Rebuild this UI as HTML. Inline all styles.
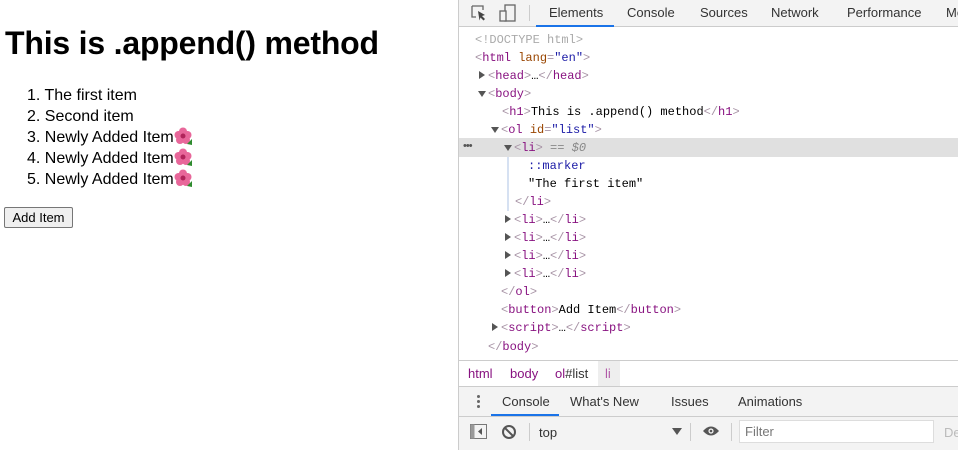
<!DOCTYPE html>
<html><head><style>
*{margin:0;padding:0;box-sizing:border-box}
body{width:958px;height:450px;overflow:hidden;background:#fff;font-family:"Liberation Sans",sans-serif;position:relative}
.left{position:absolute;left:0;top:0;width:459px;height:450px}
h1{position:absolute;left:5px;top:27px;font-size:32px;line-height:32px;font-weight:bold;letter-spacing:-0.2px;color:#000}
.li{position:absolute;left:27px;font-size:16px;color:#000;height:21px;line-height:21px}
.fl{display:inline-block;vertical-align:-3px;width:18px;height:18px}
.btn{position:absolute;left:4px;top:207px;width:69px;height:21px;border:1px solid #767676;border-radius:2px;background:#efefef;font-size:13px;text-align:center;line-height:19px}
.dt{position:absolute;left:458px;top:0;width:500px;height:450px;border-left:1px solid #ccc;background:#fff}
.tb{position:absolute;left:0;top:0;width:500px;height:27px;background:#f3f3f3;border-bottom:1px solid #ccc}
.tab{position:absolute;top:0;height:26px;line-height:25px;font-size:13px;color:#333}
.code{position:absolute;left:0;top:31px;width:500px;font-family:"Liberation Mono",monospace;font-size:12px}
.ln{position:absolute;height:18px;line-height:18px;white-space:pre}
.t{color:#881280}.b{color:#a894a6}.a{color:#994500}.v{color:#1a1aa6}.g{color:#aaa}.m{color:#1a1aa6}
.tri{position:absolute;width:0;height:0}
.r{border-top:4px solid transparent;border-bottom:4px solid transparent;border-left:6px solid #555}
.d{border-left:4px solid transparent;border-right:4px solid transparent;border-top:6px solid #555}
</style></head><body>
<div class="left">
<h1>This is .append() method</h1>
<div class="li" style="top:85px">1. The first item</div>
<div class="li" style="top:106px">2. Second item</div>
<div class="li" style="top:127px">3. Newly Added Item<svg class="fl" viewBox="0 0 18 18"><circle cx="9" cy="4.5" r="4" fill="#e8679a"/><circle cx="4.5" cy="8" r="4" fill="#e8679a"/><circle cx="13.5" cy="8" r="4" fill="#e8679a"/><circle cx="6" cy="13" r="4" fill="#e8679a"/><circle cx="12" cy="13" r="4" fill="#e8679a"/><circle cx="9" cy="9" r="2.5" fill="#b0245a"/><path d="M13 17 L18 12 L18 18 Z" fill="#2e8b2e"/></svg></div>
<div class="li" style="top:148px">4. Newly Added Item<svg class="fl" viewBox="0 0 18 18"><circle cx="9" cy="4.5" r="4" fill="#e8679a"/><circle cx="4.5" cy="8" r="4" fill="#e8679a"/><circle cx="13.5" cy="8" r="4" fill="#e8679a"/><circle cx="6" cy="13" r="4" fill="#e8679a"/><circle cx="12" cy="13" r="4" fill="#e8679a"/><circle cx="9" cy="9" r="2.5" fill="#b0245a"/><path d="M13 17 L18 12 L18 18 Z" fill="#2e8b2e"/></svg></div>
<div class="li" style="top:169px">5. Newly Added Item<svg class="fl" viewBox="0 0 18 18"><circle cx="9" cy="4.5" r="4" fill="#e8679a"/><circle cx="4.5" cy="8" r="4" fill="#e8679a"/><circle cx="13.5" cy="8" r="4" fill="#e8679a"/><circle cx="6" cy="13" r="4" fill="#e8679a"/><circle cx="12" cy="13" r="4" fill="#e8679a"/><circle cx="9" cy="9" r="2.5" fill="#b0245a"/><path d="M13 17 L18 12 L18 18 Z" fill="#2e8b2e"/></svg></div>
<div class="btn">Add Item</div>
</div>
<div class="dt">
<div class="tb">
<svg style="position:absolute;left:12px;top:5px" width="16" height="16" viewBox="0 0 16 16"><path d="M1 1h11v4M1 1v11h4" fill="none" stroke="#666" stroke-width="1.3"/><path d="M7 6l7 4-3 1 3 3-1.5 1.5-3-3-1 3z" fill="#444"/></svg>
<svg style="position:absolute;left:40px;top:4px" width="18" height="18" viewBox="0 0 18 18"><rect x="6" y="1" width="10" height="16" fill="none" stroke="#666" stroke-width="1.3"/><rect x="1" y="7" width="6" height="10" fill="#f3f3f3" stroke="#666" stroke-width="1.3"/></svg>
<div style="position:absolute;left:70px;top:5px;width:1px;height:16px;background:#ccc"></div>
<div class="tab" style="left:90px;color:#333">Elements</div>
<div style="position:absolute;left:77px;top:25px;width:78px;height:2px;background:#1a73e8"></div>
<div class="tab" style="left:168px">Console</div>
<div class="tab" style="left:241px">Sources</div>
<div class="tab" style="left:312px">Network</div>
<div class="tab" style="left:388px">Performance</div>
<div class="tab" style="left:487px">Me</div>
</div>
<div style="position:absolute;left:0;top:138px;width:500px;height:19px;background:#e0e0e0"></div>
<div style="position:absolute;left:4px;top:140px;font-size:11px;color:#555;letter-spacing:-1px">•••</div>
<div style="position:absolute;left:48px;top:157px;width:2px;height:54px;background:#d6e1f2"></div>
<div class="code">
<div class="ln g" style="left:16px;top:0">&lt;!DOCTYPE html&gt;</div>
<div class="ln" style="left:16px;top:18px"><span class="b">&lt;</span><span class="t">html</span> <span class="a">lang</span><span class="b">=</span><span class="v">"en"</span><span class="b">&gt;</span></div>
<div class="tri r" style="left:20px;top:40px"></div>
<div class="ln" style="left:29px;top:36px"><span class="b">&lt;</span><span class="t">head</span><span class="b">&gt;</span>…<span class="b">&lt;/</span><span class="t">head</span><span class="b">&gt;</span></div>
<div class="tri d" style="left:19px;top:60px"></div>
<div class="ln" style="left:29px;top:54px"><span class="b">&lt;</span><span class="t">body</span><span class="b">&gt;</span></div>
<div class="ln" style="left:43px;top:72px"><span class="b">&lt;</span><span class="t">h1</span><span class="b">&gt;</span>This is .append() method<span class="b">&lt;/</span><span class="t">h1</span><span class="b">&gt;</span></div>
<div class="tri d" style="left:32px;top:96px"></div>
<div class="ln" style="left:42px;top:90px"><span class="b">&lt;</span><span class="t">ol</span> <span class="a">id</span><span class="b">=</span><span class="v">"list"</span><span class="b">&gt;</span></div>
<div class="tri d" style="left:45px;top:114px"></div>
<div class="ln" style="left:55px;top:108px"><span class="b">&lt;</span><span class="t">li</span><span class="b">&gt;</span><span style="color:#888;font-style:italic"> == $0</span></div>
<div class="ln m" style="left:69px;top:126px">::marker</div>
<div class="ln" style="left:69px;top:144px">"The first item"</div>
<div class="ln" style="left:56px;top:162px"><span class="b">&lt;/</span><span class="t">li</span><span class="b">&gt;</span></div>
<div class="tri r" style="left:46px;top:184px"></div><div class="ln" style="left:55px;top:180px"><span class="b">&lt;</span><span class="t">li</span><span class="b">&gt;</span>…<span class="b">&lt;/</span><span class="t">li</span><span class="b">&gt;</span></div>
<div class="tri r" style="left:46px;top:202px"></div><div class="ln" style="left:55px;top:198px"><span class="b">&lt;</span><span class="t">li</span><span class="b">&gt;</span>…<span class="b">&lt;/</span><span class="t">li</span><span class="b">&gt;</span></div>
<div class="tri r" style="left:46px;top:220px"></div><div class="ln" style="left:55px;top:216px"><span class="b">&lt;</span><span class="t">li</span><span class="b">&gt;</span>…<span class="b">&lt;/</span><span class="t">li</span><span class="b">&gt;</span></div>
<div class="tri r" style="left:46px;top:238px"></div><div class="ln" style="left:55px;top:234px"><span class="b">&lt;</span><span class="t">li</span><span class="b">&gt;</span>…<span class="b">&lt;/</span><span class="t">li</span><span class="b">&gt;</span></div>
<div class="ln" style="left:42px;top:252px"><span class="b">&lt;/</span><span class="t">ol</span><span class="b">&gt;</span></div>
<div class="ln" style="left:42px;top:270px"><span class="b">&lt;</span><span class="t">button</span><span class="b">&gt;</span>Add Item<span class="b">&lt;/</span><span class="t">button</span><span class="b">&gt;</span></div>
<div class="tri r" style="left:33px;top:292px"></div><div class="ln" style="left:42px;top:288px"><span class="b">&lt;</span><span class="t">script</span><span class="b">&gt;</span>…<span class="b">&lt;/</span><span class="t">script</span><span class="b">&gt;</span></div>
<div class="ln" style="left:29px;top:307px"><span class="b">&lt;/</span><span class="t">body</span><span class="b">&gt;</span></div>
</div>
<div style="position:absolute;left:0;top:360px;width:500px;height:26px;border-top:1px solid #ccc;background:#fff;font-size:13px;line-height:26px">
<span style="position:absolute;left:9px;color:#881280">html</span>
<span style="position:absolute;left:51px;color:#881280">body</span>
<span style="position:absolute;left:96px;color:#881280">ol<span style="color:#333">#list</span></span>
<div style="position:absolute;left:139px;top:0;width:22px;height:25px;background:#eee"></div>
<span style="position:absolute;left:146px;color:#b15aa8">li</span>
</div>
<div style="position:absolute;left:0;top:386px;width:500px;height:31px;background:#f3f3f3;border-top:1px solid #ccc;border-bottom:1px solid #ccc;font-size:13px;line-height:29px;color:#333">
<div style="position:absolute;left:18px;top:8px;width:3px;height:3px;border-radius:50%;background:#666;box-shadow:0 5px 0 #666,0 10px 0 #666"></div>
<span style="position:absolute;left:43px">Console</span>
<div style="position:absolute;left:32px;top:27px;width:68px;height:2px;background:#1a73e8"></div>
<span style="position:absolute;left:111px">What's New</span>
<span style="position:absolute;left:212px">Issues</span>
<span style="position:absolute;left:279px">Animations</span>
</div>
<div style="position:absolute;left:0;top:417px;width:500px;height:33px;background:#f3f3f3;font-size:13px;color:#333">
<svg style="position:absolute;left:11px;top:7px" width="17" height="15" viewBox="0 0 17 15"><rect x="0.5" y="0.5" width="16" height="14" fill="none" stroke="#777"/><rect x="0.5" y="0.5" width="4" height="14" fill="#999"/><path d="M12 4v7l-4-3.5z" fill="#555"/></svg>
<svg style="position:absolute;left:42px;top:7px" width="16" height="16" viewBox="0 0 16 16"><circle cx="8" cy="8" r="6" fill="none" stroke="#555" stroke-width="2"/><path d="M4 4l8 8" stroke="#555" stroke-width="2"/></svg>
<div style="position:absolute;left:70px;top:6px;width:1px;height:18px;background:#ccc"></div>
<span style="position:absolute;left:80px;top:8px">top</span>
<div style="position:absolute;left:213px;top:11px;border-left:5px solid transparent;border-right:5px solid transparent;border-top:7px solid #555"></div>
<div style="position:absolute;left:231px;top:6px;width:1px;height:18px;background:#ccc"></div>
<svg style="position:absolute;left:243px;top:8px" width="18" height="12" viewBox="0 0 18 12"><path d="M1 6Q9-3 17 6Q9 15 1 6z" fill="#555"/><circle cx="9" cy="6" r="2.6" fill="#f3f3f3"/><circle cx="9" cy="6" r="1.3" fill="#555"/></svg>
<div style="position:absolute;left:272px;top:6px;width:1px;height:18px;background:#ccc"></div>
<div style="position:absolute;left:280px;top:3px;width:195px;height:23px;background:#fff;border:1px solid #ddd;line-height:21px;padding-left:5px;color:#777">Filter</div>
<span style="position:absolute;left:485px;top:8px;color:#bbb">De</span>
</div>
</div>
</body></html>
